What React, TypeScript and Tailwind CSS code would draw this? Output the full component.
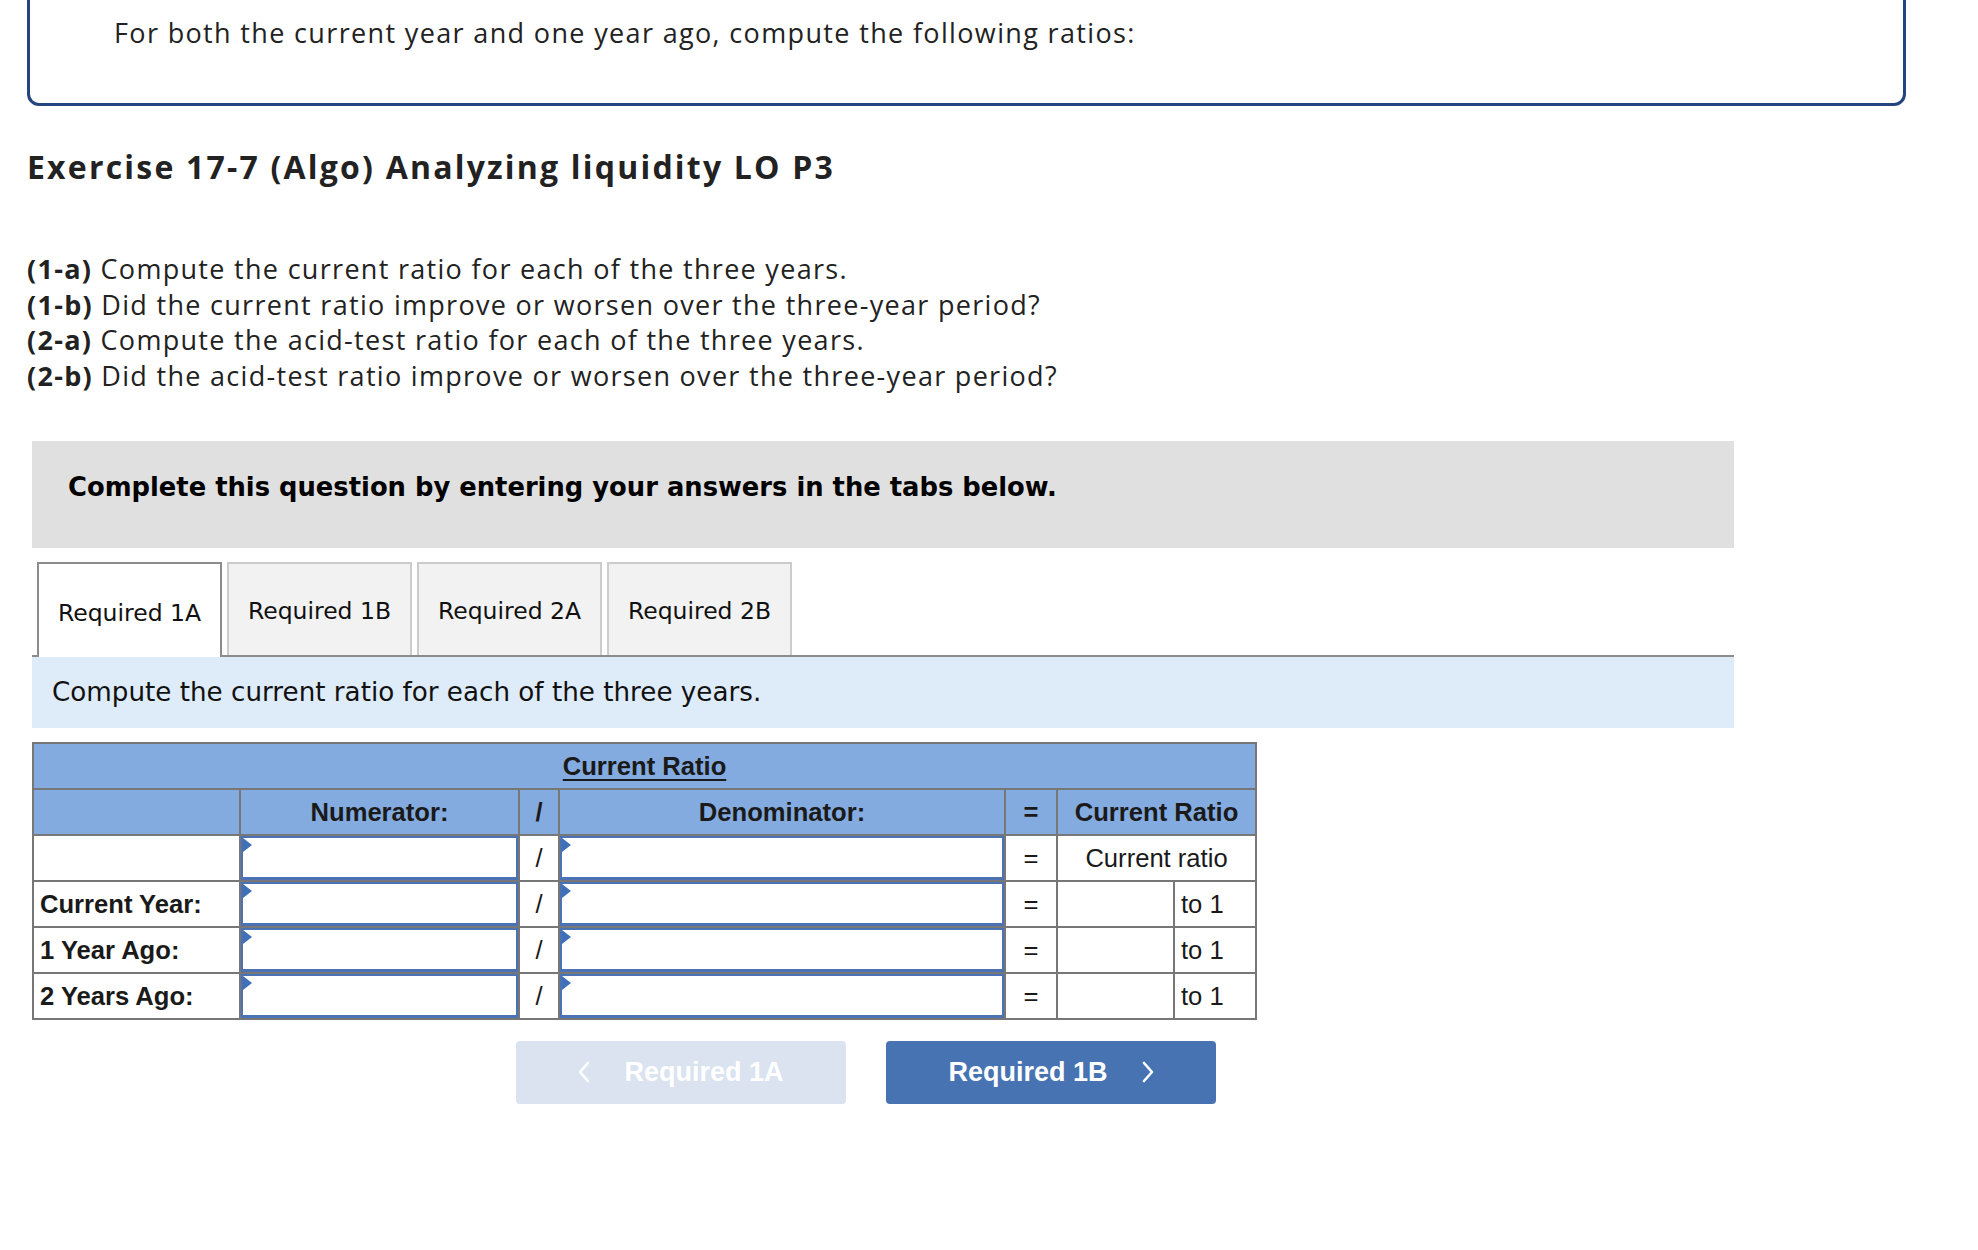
import React from "react";

const MAIN = "font-['Open_Sans','Noto_Sans',sans-serif]";
const TAHOMA = "font-['DejaVu_Sans','Noto_Sans',sans-serif]";
const ARIAL = "font-['Liberation_Sans','Arial',sans-serif]";

function Flag() {
  return (
    <svg className="absolute left-0 top-0" width="10" height="14" viewBox="0 0 10 14">
      <polygon points="0,0 9,7 0,14" fill="#3f70b8" />
    </svg>
  );
}

function InputCell() {
  return (
    <td className="p-0 border-2 border-[#777777] h-[46px]">
      <div className="relative h-[44px] border-2 border-b-[3px] border-[#4a72b5] bg-white">
        <Flag />
      </div>
    </td>
  );
}

function ChevronLeft() {
  return (
    <svg width="12" height="22" viewBox="0 0 12 22" fill="none">
      <path d="M10 2 L2 11 L10 20" stroke="white" strokeWidth="2.6" strokeLinecap="round" strokeLinejoin="round" />
    </svg>
  );
}

function ChevronRight() {
  return (
    <svg width="12" height="22" viewBox="0 0 12 22" fill="none">
      <path d="M2 2 L10 11 L2 20" stroke="white" strokeWidth="2.6" strokeLinecap="round" strokeLinejoin="round" />
    </svg>
  );
}

export default function App() {
  const rows = ["Current Year:", "1 Year Ago:", "2 Years Ago:"];
  const tabs = ["Required 1A", "Required 1B", "Required 2A", "Required 2B"];
  return (
    <div className={`w-[1978px] min-h-[1250px] bg-white overflow-hidden text-[#222222] ${MAIN}`}>
      {/* top box */}
      <div className="ml-[27px] w-[1879px] -mt-[40px] h-[146px] border-[3px] border-[#24457f] rounded-b-[12px] pl-[84px] pt-[52px]">
        <p className="text-[27px] leading-[36px] tracking-[1.35px]">For both the current year and one year ago, compute the following ratios:</p>
      </div>

      <h1 className="ml-[27px] mt-[41px] text-[32px] leading-[40px] font-bold tracking-[2.2px] text-[#222222]">
        Exercise 17-7 (Algo) Analyzing liquidity LO P3
      </h1>

      <div className="ml-[27px] mt-[64px] text-[27px] leading-[35.7px] tracking-[1.3px]">
        <p><b>(1-a)</b> Compute the current ratio for each of the three years.</p>
        <p><b>(1-b)</b> Did the current ratio improve or worsen over the three-year period?</p>
        <p><b>(2-a)</b> Compute the acid-test ratio for each of the three years.</p>
        <p><b>(2-b)</b> Did the acid-test ratio improve or worsen over the three-year period?</p>
      </div>

      <div className="ml-[32px] w-[1702px]">
        <div className={`mt-[47px] h-[107px] bg-[#e0e0e0] pl-[36px] pt-[30px] ${TAHOMA}`}>
          <p className="text-[25.8px] leading-[32px] font-bold text-black">
            Complete this question by entering your answers in the tabs below.
          </p>
        </div>

        {/* tabs */}
        <div className={`mt-[14px] flex items-end border-b-2 border-[#8c8c8c] pl-[5px] gap-[5px] ${TAHOMA}`}>
          {tabs.map((t, i) => (
            <div
              key={t}
              className={
                i === 0
                  ? "w-[185px] h-[95px] -mb-[2px] pt-[6px] flex items-center justify-center bg-white border-2 border-b-0 border-[#8c8c8c] text-[23.5px] text-[#111111]"
                  : "w-[185px] h-[93px] pt-[5px] flex items-center justify-center bg-[#f2f2f2] border-2 border-b-0 border-[#cccccc] text-[23.5px] text-[#111111]"
              }
            >
              {t}
            </div>
          ))}
        </div>

        <div className={`h-[71px] bg-[#deebf8] flex items-center pl-[20px] ${TAHOMA}`}>
          <p className="text-[26.2px] text-[#111111]">Compute the current ratio for each of the three years.</p>
        </div>

        {/* table */}
        <table className={`mt-[14px] border-collapse table-fixed w-[1223px] text-[25.6px] text-[#1a1a1a] ${ARIAL}`}>
          <colgroup>
            <col className="w-[207px]" />
            <col className="w-[279px]" />
            <col className="w-[40px]" />
            <col className="w-[446px]" />
            <col className="w-[52px]" />
            <col className="w-[117px]" />
            <col className="w-[82px]" />
          </colgroup>
          <thead>
            <tr className="h-[46px] bg-[#84abdf]">
              <th colSpan={7} className="border-2 border-[#777777] font-bold underline underline-offset-[4px] decoration-[2px] text-center">
                Current Ratio
              </th>
            </tr>
            <tr className="h-[46px] bg-[#84abdf] font-bold">
              <th className="border-2 border-[#777777]"></th>
              <th className="border-2 border-[#777777] font-bold">Numerator:</th>
              <th className="border-2 border-[#777777] font-bold">/</th>
              <th className="border-2 border-[#777777] font-bold">Denominator:</th>
              <th className="border-2 border-[#777777] font-bold">=</th>
              <th colSpan={2} className="border-2 border-[#777777] font-bold">Current Ratio</th>
            </tr>
          </thead>
          <tbody>
            <tr className="h-[46px]">
              <td className="border-2 border-[#777777]"></td>
              <InputCell />
              <td className="border-2 border-[#777777] text-center">/</td>
              <InputCell />
              <td className="border-2 border-[#777777] text-center">=</td>
              <td colSpan={2} className="border-2 border-[#777777] text-center">Current ratio</td>
            </tr>
            {rows.map((r) => (
              <tr key={r} className="h-[46px]">
                <td className="border-2 border-[#777777] font-bold pl-[6px]">{r}</td>
                <InputCell />
                <td className="border-2 border-[#777777] text-center">/</td>
                <InputCell />
                <td className="border-2 border-[#777777] text-center">=</td>
                <td className="border-2 border-[#777777]"></td>
                <td className="border-2 border-[#777777] pl-[6px]">to 1</td>
              </tr>
            ))}
          </tbody>
        </table>

        {/* nav buttons */}
        <div className={`mt-[21px] ml-[484px] flex gap-[40px] ${ARIAL}`}>
          <div className="w-[330px] h-[63px] rounded-[4px] bg-[#dae3ef] flex items-center justify-center gap-[34px] text-white text-[27px] font-bold">
            <ChevronLeft />
            <span>Required 1A</span>
          </div>
          <div className="w-[330px] h-[63px] rounded-[4px] bg-[#4773b3] flex items-center justify-center gap-[34px] text-white text-[27px] font-bold">
            <span>Required 1B</span>
            <ChevronRight />
          </div>
        </div>
      </div>
    </div>
  );
}
